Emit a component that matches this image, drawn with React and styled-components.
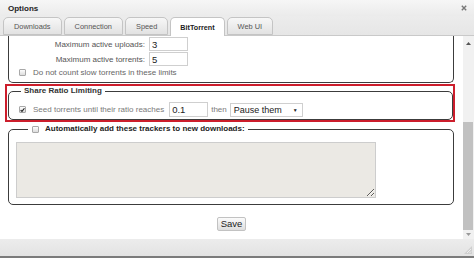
import React from "react";
import styled, { createGlobalStyle } from "styled-components";

const Global = createGlobalStyle`
  html, body { margin: 0; padding: 0; background: #fff; }
  body { font-family: "Liberation Sans", Arial, sans-serif; }
  * { box-sizing: border-box; }
`;

const Window = styled.div`
  width: 474px;
  height: 258px;
  display: flex;
  flex-direction: column;
  background: #fff;
  overflow: hidden;
`;

const TitleBar = styled.div`
  height: 16px;
  flex: none;
  display: flex;
  align-items: center;
  justify-content: space-between;
  padding: 0 7px 0 8px;
  background: linear-gradient(#f6f6f6, #ebebeb);
  font-size: 8px;
  font-weight: bold;
  color: #222;
`;

const Close = styled.svg`
  width: 6px;
  height: 6px;
`;

const TabBar = styled.div`
  height: 20px;
  flex: none;
  display: flex;
  align-items: flex-end;
  gap: 2px;
  padding-left: 3px;
  background: linear-gradient(#ececec, #e6e6e6);
  border-bottom: 1px solid #c9c9c9;
`;

const Tab = styled.div`
  height: ${(p) => (p.$active ? "19px" : "18px")};
  margin-bottom: ${(p) => (p.$active ? "-1px" : "0")};
  padding: 0 ${(p) => (p.$active ? "9px" : "10px")};
  display: flex;
  align-items: center;
  border: 1px solid #c4c4c4;
  border-bottom: ${(p) => (p.$active ? "none" : "1px solid #c4c4c4")};
  border-radius: 5px 5px 0 0;
  background: ${(p) => (p.$active ? "#fff" : "linear-gradient(#f7f7f7, #e2e2e2)")};
  font-size: ${(p) => (p.$active ? "7.2px" : "7.4px")};
  font-weight: ${(p) => (p.$active ? "bold" : "normal")};
  color: ${(p) => (p.$active ? "#222" : "#555")};
`;

const Body = styled.div`
  flex: none;
  height: 203px;
  display: flex;
`;

const Content = styled.div`
  flex: 1;
  overflow: hidden;
  background: #fff;
  display: flex;
  flex-direction: column;
`;

const ClippedSet = styled.div`
  margin: 0 9px 0 8px;
  border: 1px solid #3c3c3c;
  border-top: none;
  border-radius: 0 0 5px 5px;
  padding: 1px 0 4px 0;
`;

const LimitGrid = styled.div`
  display: grid;
  grid-template-columns: 136px 39px;
  column-gap: 4px;
  row-gap: 1px;
  align-items: center;
`;

const Label = styled.span`
  font-size: 8px;
  color: ${(p) => p.$color || "#555"};
  text-align: ${(p) => p.$align || "left"};
  white-space: nowrap;
  margin: ${(p) => p.$margin || "0"};
`;

const TextInput = styled.input`
  width: ${(p) => p.$w || "39px"};
  height: ${(p) => p.$h || "14px"};
  border: 1px solid #cfcfcf;
  padding: 0 0 0 2px;
  margin: ${(p) => p.$margin || "0"};
  font-family: "Liberation Sans", Arial, sans-serif;
  font-size: 9.5px;
  color: #222;
  background: #fff;
  outline: none;
`;

const CheckRow = styled.div`
  display: flex;
  align-items: center;
  height: ${(p) => p.$h || "12px"};
  padding-left: 10px;
`;

const Box = styled.span`
  width: 7px;
  height: 7px;
  flex: none;
  border: 1px solid #a8a8a8;
  border-radius: 1px;
  background: linear-gradient(#fdfdfd, #dcdcdc);
  margin-right: ${(p) => p.$mr || "7px"};
  margin-left: ${(p) => p.$ml || "0"};
  display: flex;
  align-items: center;
  justify-content: center;
`;

const Highlight = styled.div`
  margin: 1px 8px 0 5px;
  border: 2px solid #cc1e2c;
  padding: 0 0 0 1px;
`;

const FieldSet = styled.fieldset`
  margin: ${(p) => p.$margin || "0"};
  min-width: 0;
  border: 1px solid #3c3c3c;
  border-radius: 5px;
  padding: ${(p) => p.$pad || "0"};
`;

const Legend = styled.legend`
  margin-left: 12px;
  padding: 0 3px 0 3px;
  font-size: 8px;
  line-height: 10px;
  font-weight: bold;
  color: ${(p) => p.$color || "#333"};
  display: flex;
  align-items: center;
`;

const SelectBox = styled.div`
  width: 73px;
  height: 14px;
  margin-left: 3px;
  border: 1px solid #cfcfcf;
  background: #fff;
  display: flex;
  align-items: center;
  justify-content: space-between;
  padding: 0 4px 0 3px;
  font-size: 9px;
  color: #222;
`;

const Arrow = styled.span`
  font-size: 5px;
  color: #222;
`;

const TextArea = styled.textarea`
  display: block;
  width: 360px;
  height: 56px;
  margin-top: 8px;
  border: 1px solid #cdcdcd;
  background: #ebe9e4;
  resize: both;
  outline: none;
`;

const SaveRow = styled.div`
  display: flex;
  justify-content: center;
  margin-top: 12px;
`;

const SaveButton = styled.button`
  height: 14px;
  padding: 0 3px;
  border: 1px solid #c2c2c2;
  border-radius: 2px;
  background: linear-gradient(#fbfbfb, #dedede);
  font-family: "Liberation Sans", Arial, sans-serif;
  font-size: 9.5px;
  color: #222;
  line-height: 12px;
`;

const Scrollbar = styled.div`
  width: 11px;
  flex: none;
  display: flex;
  flex-direction: column;
  background: #f1f1f1;
`;

const ArrowCell = styled.div`
  height: ${(p) => p.$h};
  flex: none;
  display: flex;
  align-items: ${(p) => p.$align || "center"};
  justify-content: center;
`;

const Spacer = styled.div`
  flex: 1;
`;

const Thumb = styled.div`
  height: 108px;
  flex: none;
  margin: 0 1px 0 0;
  background: #c1c1c1;
`;

const StatusBar = styled.div`
  height: 17px;
  flex: none;
  display: flex;
  justify-content: flex-end;
  align-items: flex-end;
  padding: 0 2px 2px 0;
  background: linear-gradient(#ececec, #e3e3e3);
`;

const BottomEdge = styled.div`
  height: 2px;
  flex: none;
  background: #7b7b7b;
`;

const Tick = () => (
  <svg width="6" height="6" viewBox="0 0 6 6">
    <path d="M0.8 3.1 L2.4 4.7 L5.3 0.9" fill="none" stroke="#222" strokeWidth="1.3" />
  </svg>
);

const Triangle = ({ up }) => (
  <svg width="5" height="3" viewBox="0 0 5 3">
    <path d={up ? "M0 3 L2.5 0 L5 3 Z" : "M0 0 L5 0 L2.5 3 Z"} fill={up ? "#555" : "#999"} />
  </svg>
);

const tabs = ["Downloads", "Connection", "Speed", "BitTorrent", "Web UI"];

export default function App() {
  return (
    <>
      <Global />
      <Window>
        <TitleBar>
          <span>Options</span>
          <Close viewBox="0 0 6 6">
            <path d="M0.8 0.8 L5.2 5.2 M5.2 0.8 L0.8 5.2" stroke="#777" strokeWidth="1.4" />
          </Close>
        </TitleBar>
        <TabBar>
          {tabs.map((t) => (
            <Tab key={t} $active={t === "BitTorrent"}>
              {t}
            </Tab>
          ))}
        </TabBar>
        <Body>
          <Content>
            <ClippedSet>
              <LimitGrid>
                <Label $align="right">Maximum active uploads:</Label>
                <TextInput readOnly value="3" />
                <Label $align="right">Maximum active torrents:</Label>
                <TextInput readOnly value="5" />
              </LimitGrid>
              <CheckRow>
                <Box />
                <Label $color="#666">Do not count slow torrents in these limits</Label>
              </CheckRow>
            </ClippedSet>

            <Highlight>
              <FieldSet $pad="6px 0 2px 0">
                <Legend>Share Ratio Limiting</Legend>
                <CheckRow $h="15px">
                  <Box>
                    <Tick />
                  </Box>
                  <Label $color="#7a7a7a">Seed torrents until their ratio reaches</Label>
                  <TextInput readOnly value="0.1" $margin="0 0 0 5px" $h="15px" />
                  <Label $color="#7a7a7a" $margin="0 0 0 3px">then</Label>
                  <SelectBox>
                    <span>Pause them</span>
                    <Arrow>▼</Arrow>
                  </SelectBox>
                </CheckRow>
              </FieldSet>
            </Highlight>

            <FieldSet $margin="2px 9px 0 8px" $pad="0 0 6px 7px">
              <Legend $color="#222">
                <Box $ml="1px" $mr="6px" />
                Automatically add these trackers to new downloads:
              </Legend>
              <TextArea readOnly />
            </FieldSet>

            <SaveRow>
              <SaveButton>Save</SaveButton>
            </SaveRow>
          </Content>
          <Scrollbar>
            <ArrowCell $h="14px">
              <Triangle up />
            </ArrowCell>
            <Spacer />
            <Thumb />
            <ArrowCell $h="9px">
              <Triangle />
            </ArrowCell>
          </Scrollbar>
        </Body>
        <StatusBar>
          <svg width="8" height="8" viewBox="0 0 8 8">
            <path d="M8 0 L8 8 L0 8 Z" fill="#cfcfcf" />
            <path d="M7 3 L3 7 M7 5.5 L5.5 7" stroke="#f8f8f8" strokeWidth="0.8" />
          </svg>
        </StatusBar>
        <BottomEdge />
      </Window>
    </>
  );
}
